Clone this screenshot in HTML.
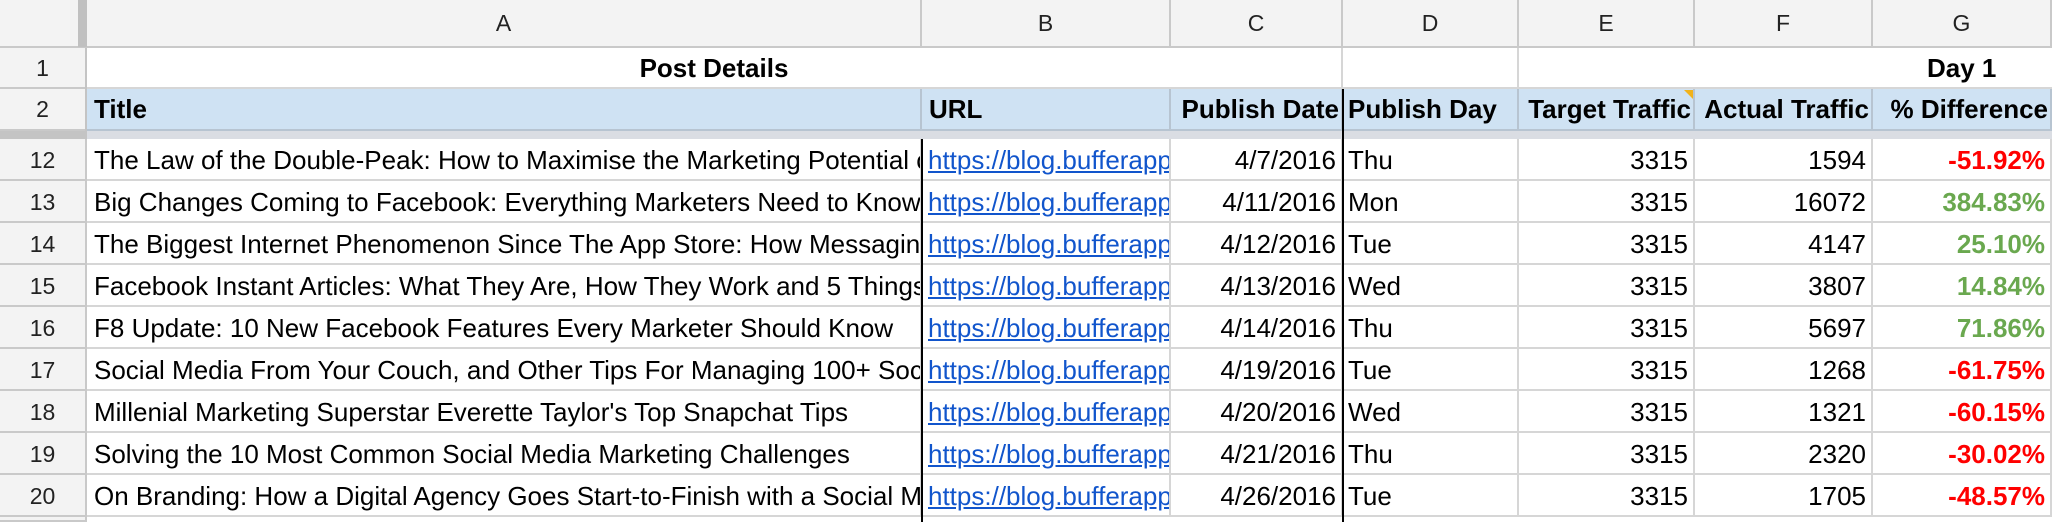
<!DOCTYPE html>
<html style="width:2052px;height:522px;overflow:hidden"><head><meta charset="utf-8"><style>
body{margin:0;width:2052px;height:522px;overflow:hidden;background:#fff;font-family:"Liberation Sans",Arial,sans-serif;position:relative}
.c{position:absolute;box-sizing:border-box;white-space:nowrap;overflow:hidden;font-size:26px;color:#000;border-right:2px solid #d6d6d6;border-bottom:2px solid #d6d6d6}
.h{background:#f3f3f3;border-color:#c9c9c9;text-align:center;font-size:23px;color:#222}
.b{font-weight:bold}
.r{text-align:right;padding-right:5px}
.l{padding-left:7px}
.a{color:#1155cc;text-decoration:underline}
.red{color:#ff0000;font-weight:bold}
.grn{color:#6aa84f;font-weight:bold}
.blue{background:#cfe2f3;border-color:#b7c4d1}
</style></head><body>
<div class="c h" style="left:0;top:0;width:87px;height:48px;line-height:46px"></div>
<div style="position:absolute;left:78px;top:0;width:9px;height:47px;background:#c0c0c0"></div>
<div class="c h" style="left:87px;top:0;width:835px;height:48px;line-height:46px">A</div>
<div class="c h" style="left:922px;top:0;width:249px;height:48px;line-height:46px">B</div>
<div class="c h" style="left:1171px;top:0;width:172px;height:48px;line-height:46px">C</div>
<div class="c h" style="left:1343px;top:0;width:176px;height:48px;line-height:46px">D</div>
<div class="c h" style="left:1519px;top:0;width:176px;height:48px;line-height:46px">E</div>
<div class="c h" style="left:1695px;top:0;width:178px;height:48px;line-height:46px">F</div>
<div class="c h" style="left:1873px;top:0;width:179px;height:48px;line-height:46px">G</div>
<div class="c h" style="left:0;top:48px;width:87px;height:41px;line-height:40px">1</div>
<div class="c b" style="left:87px;top:48px;width:1256px;height:41px;line-height:40px;text-align:center">Post Details</div>
<div class="c" style="left:1343px;top:48px;width:176px;height:41px"></div>
<div class="c b" style="left:1519px;top:48px;width:533px;height:41px;line-height:40px;border-right:none"><span style="position:absolute;left:408px">Day 1</span></div>
<div class="c h" style="left:0;top:89px;width:87px;height:42px;line-height:40px">2</div>
<div class="c b blue l" style="left:87px;top:89px;width:835px;height:42px;line-height:40px">Title</div>
<div class="c b blue l" style="left:922px;top:89px;width:249px;height:42px;line-height:40px">URL</div>
<div class="c b blue r" style="left:1171px;top:89px;width:172px;height:42px;line-height:40px;padding-right:2px">Publish Date</div>
<div class="c b blue l" style="left:1343px;top:89px;width:176px;height:42px;line-height:40px;padding-left:5px">Publish Day</div>
<div class="c b blue r" style="left:1519px;top:89px;width:176px;height:42px;line-height:40px;padding-right:2px">Target Traffic</div>
<div style="position:absolute;left:1684px;top:90px;width:0;height:0;border-left:9px solid transparent;border-top:9px solid #f1b21a"></div>
<div class="c b blue r" style="left:1695px;top:89px;width:178px;height:42px;line-height:40px;padding-right:2px">Actual Traffic</div>
<div class="c b blue r" style="left:1873px;top:89px;width:179px;height:42px;line-height:40px;padding-right:2px">% Difference</div>
<div style="position:absolute;left:0;top:131px;width:87px;height:8px;background:#c4c4c4"></div>
<div style="position:absolute;left:87px;top:131px;width:1965px;height:8px;background:#dadde3"></div>
<div style="position:absolute;left:85px;top:48px;width:2px;height:474px;background:#c4c4c4"></div>
<div id="rows"></div>
<script>
var d=[
[12,"The Law of the Double-Peak: How to Maximise the Marketing Potential of","4/7/2016","Thu","1594","-51.92%",0],
[13,"Big Changes Coming to Facebook: Everything Marketers Need to Know","4/11/2016","Mon","16072","384.83%",1],
[14,"The Biggest Internet Phenomenon Since The App Store: How Messaging","4/12/2016","Tue","4147","25.10%",1],
[15,"Facebook Instant Articles: What They Are, How They Work and 5 Things","4/13/2016","Wed","3807","14.84%",1],
[16,"F8 Update: 10 New Facebook Features Every Marketer Should Know","4/14/2016","Thu","5697","71.86%",1],
[17,"Social Media From Your Couch, and Other Tips For Managing 100+ Social","4/19/2016","Tue","1268","-61.75%",0],
[18,"Millenial Marketing Superstar Everette Taylor's Top Snapchat Tips","4/20/2016","Wed","1321","-60.15%",0],
[19,"Solving the 10 Most Common Social Media Marketing Challenges","4/21/2016","Thu","2320","-30.02%",0],
[20,"On Branding: How a Digital Agency Goes Start-to-Finish with a Social Media","4/26/2016","Tue","1705","-48.57%",0]];
var h="";
d.forEach(function(r,i){var t=139+i*42,s="top:"+t+"px;height:42px;line-height:42px;";
h+='<div class="c h" style="left:0;'+s+'width:87px">'+r[0]+'</div>';
h+='<div class="c l" style="left:87px;'+s+'width:835px">'+r[1]+'</div>';
h+='<div class="c l" style="left:922px;'+s+'width:249px;padding-left:6px"><span class="a">https://blog.bufferapp.com/</span></div>';
h+='<div class="c r" style="left:1171px;'+s+'width:172px">'+r[2]+'</div>';
h+='<div class="c l" style="left:1343px;'+s+'width:176px;padding-left:5px">'+r[3]+'</div>';
h+='<div class="c r" style="left:1519px;'+s+'width:176px">3315</div>';
h+='<div class="c r" style="left:1695px;'+s+'width:178px">'+r[4]+'</div>';
h+='<div class="c r '+(r[6]?"grn":"red")+'" style="left:1873px;'+s+'width:179px">'+r[5]+'</div>';});
h+='<div class="c h" style="left:0;top:517px;width:87px;height:5px"></div>';
document.getElementById("rows").innerHTML=h;
</script>
<div style="position:absolute;left:921px;top:139px;width:2px;height:383px;background:#000"></div>
<div style="position:absolute;left:1342px;top:89px;width:2px;height:433px;background:#000"></div>
</body></html>
